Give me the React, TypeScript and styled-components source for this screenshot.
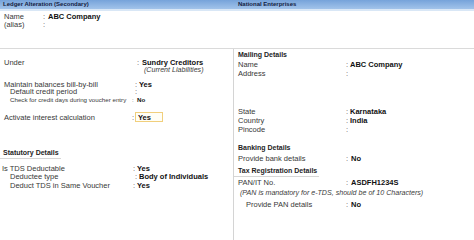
import React from "react";
import styled, {createGlobalStyle} from "styled-components";

const GlobalStyle = createGlobalStyle`
    html, body {
        margin: 0;
        padding: 0;
        background: #ffffff;
    }
    body {
        font-family: "Liberation Sans", Arial, sans-serif;
        color: #3a3a3a;
    }
`;

const Screen = styled.div`
    width: 474px;
    height: 240px;
    overflow: hidden;
    background: #ffffff;
    display: flex;
    flex-direction: column;
`;

const TitleBar = styled.div`
    display: flex;
    height: 9px;
    background: linear-gradient(to bottom, #76a3da, #a2c3ea);
    border-bottom: 2px solid #d9e7f6;
    font-size: 6px;
    font-weight: 700;
    color: #13213f;
    line-height: 9px;
`;

const TitleCell = styled.div<{ $w?: number; $pl: number }>`
    width: ${p => (p.$w ? `${p.$w}px` : "auto")};
    flex: ${p => (p.$w ? "none" : "1")};
    padding-left: ${p => p.$pl}px;
    white-space: nowrap;
`;

const TopPane = styled.div`
    height: 36px;
    padding-top: 1px;
    border-bottom: 1px solid #dadada;
`;

const Columns = styled.div`
    display: flex;
    flex: 1;
`;

const Column = styled.div<{ $w?: number; $divider?: boolean }>`
    width: ${p => (p.$w ? `${p.$w}px` : "auto")};
    flex: ${p => (p.$w ? "none" : "1")};
    border-right: ${p => (p.$divider ? "1px solid #d4d4d4" : "none")};
    display: flex;
    flex-direction: column;
`;

const Row = styled.div<{ $h: number; $mt?: number; $pl: number; $small?: boolean }>`
    display: flex;
    align-items: center;
    height: ${p => p.$h}px;
    margin-top: ${p => p.$mt ?? 0}px;
    padding-left: ${p => p.$pl}px;
    font-size: ${p => (p.$small ? "6.2px" : "7.5px")};
    white-space: nowrap;
`;

const Label = styled.span<{ $w: number }>`
    width: ${p => p.$w}px;
    flex: none;
    color: #383838;
`;

const Colon = styled.span`
    width: 3px;
    flex: none;
    color: #555;
`;

const Value = styled.span<{ $pl?: number }>`
    padding-left: ${p => p.$pl ?? 0}px;
    font-weight: 700;
    color: #111;
`;

const Note = styled.span<{ $pl?: number }>`
    padding-left: ${p => p.$pl ?? 0}px;
    font-style: italic;
    color: #3c3c3c;
    font-size: 7.1px;
`;

const SectionHead = styled.div<{ $mt: number; $pl: number; $line?: boolean }>`
    margin-top: ${p => p.$mt}px;
    padding-left: ${p => p.$pl}px;
    padding-right: 2px;
    height: 8px;
    line-height: 8px;
    padding-bottom: ${p => (p.$line ? 1 : 0)}px;
    border-bottom: ${p => (p.$line ? "1px solid #d6d6d6" : "none")};
    align-self: flex-start;
    font-size: 7px;
    font-weight: 700;
    color: #1e1e1e;
    white-space: nowrap;
`;

const FocusBox = styled.span`
    display: inline-flex;
    align-items: center;
    box-sizing: border-box;
    width: 28px;
    height: 10px;
    padding-left: 2px;
    border: 1px solid #f1cf7c;
    background: #fffef6;
    font-weight: 700;
    color: #111;
`;

const RIGHT_LABEL = 108;

export default function App() {
    return (
        <Screen>
            <GlobalStyle/>
            <TitleBar>
                <TitleCell $w={232} $pl={3}>Ledger Alteration (Secondary)</TitleCell>
                <TitleCell $pl={3}>National Enterprises</TitleCell>
            </TitleBar>

            <TopPane>
                <Row $h={8} $pl={4}>
                    <Label $w={39}>Name</Label><Colon>:</Colon><Value $pl={2}>ABC Company</Value>
                </Row>
                <Row $h={8} $pl={4}>
                    <Label $w={39}>(alias)</Label><Colon>:</Colon>
                </Row>
            </TopPane>

            <Columns>
                <Column $w={233} $divider>
                    <Row $h={8} $mt={9} $pl={4}>
                        <Label $w={133}>Under</Label><Colon>:</Colon><Value $pl={2}>Sundry Creditors</Value>
                    </Row>
                    <Row $h={8} $pl={4}>
                        <Label $w={136}/><Note $pl={4}>(Current Liabilities)</Note>
                    </Row>
                    <Row $h={8} $mt={6} $pl={4}>
                        <Label $w={131}>Maintain balances bill-by-bill</Label><Colon>:</Colon><Value $pl={1}>Yes</Value>
                    </Row>
                    <Row $h={7.5} $pl={10}>
                        <Label $w={125}>Default credit period</Label><Colon>:</Colon>
                    </Row>
                    <Row $h={7} $pl={10} $small>
                        <Label $w={122}>Check for credit days during voucher entry</Label><Colon>:</Colon><Value $pl={2}>No</Value>
                    </Row>
                    <Row $h={10} $mt={9.5} $pl={4}>
                        <Label $w={128}>Activate interest calculation</Label><Colon>:</Colon><FocusBox>Yes</FocusBox>
                    </Row>

                    <SectionHead $mt={27} $pl={3} $line>Statutory Details</SectionHead>
                    <Row $h={8.5} $mt={5} $pl={2}>
                        <Label $w={131}>Is TDS Deductable</Label><Colon>:</Colon><Value $pl={1}>Yes</Value>
                    </Row>
                    <Row $h={8.5} $pl={10}>
                        <Label $w={125}>Deductee type</Label><Colon>:</Colon><Value $pl={1}>Body of Individuals</Value>
                    </Row>
                    <Row $h={8.5} $pl={10}>
                        <Label $w={123}>Deduct TDS in Same Voucher</Label><Colon>:</Colon><Value $pl={1}>Yes</Value>
                    </Row>
                </Column>

                <Column>
                    <SectionHead $mt={2} $pl={4}>Mailing Details</SectionHead>
                    <Row $h={9} $mt={0.5} $pl={4}>
                        <Label $w={RIGHT_LABEL}>Name</Label><Colon>:</Colon><Value $pl={1}>ABC Company</Value>
                    </Row>
                    <Row $h={9} $pl={4}>
                        <Label $w={RIGHT_LABEL}>Address</Label><Colon>:</Colon>
                    </Row>
                    <Row $h={9} $mt={29} $pl={4}>
                        <Label $w={RIGHT_LABEL}>State</Label><Colon>:</Colon><Value $pl={1}>Karnataka</Value>
                    </Row>
                    <Row $h={9} $pl={4}>
                        <Label $w={RIGHT_LABEL}>Country</Label><Colon>:</Colon><Value $pl={1}>India</Value>
                    </Row>
                    <Row $h={9} $pl={4}>
                        <Label $w={RIGHT_LABEL}>Pincode</Label><Colon>:</Colon>
                    </Row>

                    <SectionHead $mt={10.5} $pl={4}>Banking Details</SectionHead>
                    <Row $h={8} $mt={2} $pl={4}>
                        <Label $w={RIGHT_LABEL}>Provide bank details</Label><Colon>:</Colon><Value $pl={2}>No</Value>
                    </Row>

                    <SectionHead $mt={5} $pl={4} $line>Tax Registration Details</SectionHead>
                    <Row $h={8} $mt={1} $pl={4}>
                        <Label $w={RIGHT_LABEL}>PAN/IT No.</Label><Colon>:</Colon><Value $pl={2}>ASDFH1234S</Value>
                    </Row>
                    <Row $h={8} $mt={3} $pl={6}>
                        <Note>(PAN is mandatory for e-TDS, should be of 10 Characters)</Note>
                    </Row>
                    <Row $h={8} $mt={3} $pl={12}>
                        <Label $w={RIGHT_LABEL - 8}>Provide PAN details</Label><Colon>:</Colon><Value $pl={2}>No</Value>
                    </Row>
                </Column>
            </Columns>
        </Screen>
    );
}
